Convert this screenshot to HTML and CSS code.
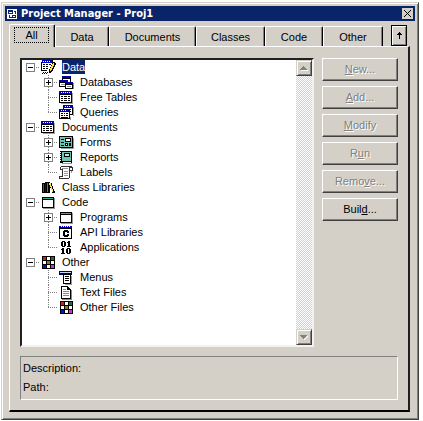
FILE: index.html
```
<!DOCTYPE html>
<html lang="en">
<head>
  <meta charset="UTF-8">
  <meta name="viewport" content="width=device-width, initial-scale=1.0">
  <title>Project Manager - Proj1</title>
  <link rel="stylesheet" href="styles.css">
</head>
<body>
  <!-- tree icons -->
  <svg class="sprite" width="0" height="0" aria-hidden="true">
    <symbol id="i-table" viewBox="0 0 16 15">
      <path fill="#a0a0a0" d="M3 13h12v1h-12zM14 3h1v11h-1z"/>
      <path d="M1 1h13v12h-13z"/>
      <path fill="#00c" d="M1 1h13v3h-13z"/>
      <path fill="#fff" d="M2 5h11v7h-11zM3 2h1v1h-1zM5 2h1v1h-1zM7 2h1v1h-1zM9 2h1v1h-1zM11 2h1v1h-1z"/>
      <path d="M3 6h2v1h-2zM6 6h3v1h-3zM10 6h2v1h-2zM3 8h2v1h-2zM6 8h3v1h-3zM10 8h2v1h-2zM3 10h2v1h-2zM6 10h3v1h-3zM10 10h2v1h-2z"/>
    </symbol>
    <symbol id="i-data" viewBox="0 0 16 15">
      <path fill="#00c" d="M2 0h10v3h-10z"/>
      <path fill="#fff" d="M3 1h1v1h-1zM5 1h1v1h-1zM7 1h1v1h-1zM9 1h1v1h-1zM2 3h10v10h-10z"/>
      <path d="M1 2h1v9h-1zM3 4h2v1h-2zM6 4h2v1h-2zM9 4h2v1h-2zM3 6h2v1h-2zM6 6h2v1h-2zM3 8h2v1h-2zM6 8h2v1h-2zM2 10h5v1h-5zM12 0h1v3h-1zM3 12h1v1h-1zM5 12h1v1h-1zM7 12h1v1h-1zM2 13h1v1h-1zM4 13h1v1h-1zM6 13h1v1h-1z"/>
      <path d="M13 2h2v1h1v2h-1v2h-1v2h-1v2h-1v1h-1v1h-2v-4h1v-2h1v-2h1v-2h1z"/>
      <path fill="#ffe040" d="M13 3h1v3h-1v2h-1v2h-1v1h-1v-3h1v-2h1v-2h1z"/>
    </symbol>
    <symbol id="i-database" viewBox="0 0 16 15">
      <path d="M4 1h9v8h-9z"/>
      <path fill="#00a" d="M4 1h9v2h-9z"/>
      <path fill="#fff" d="M5 4h7v4h-7z"/>
      <path d="M1 5h9v7h-9z"/>
      <path fill="#00a" d="M1 5h9v2h-9z"/>
      <path fill="#fff" d="M2 8h7v3h-7z"/>
      <path fill="#888" d="M3 9h5v1h-5z"/>
      <path d="M7 7h8v7h-8z"/>
      <path fill="#00a" d="M7 7h8v2h-8z"/>
      <path fill="#fff" d="M8 10h6v3h-6z"/>
      <path fill="#888" d="M9 11h4v1h-4zM15 8h1v6h-1z"/>
    </symbol>
    <symbol id="i-query" viewBox="0 0 16 15">
      <path fill="#999" d="M15 2h1v9h-1zM12 12h1v3h-1z"/>
      <path d="M5 0h10v10h-10z"/>
      <path fill="#00a" d="M5 0h10v3h-10z"/>
      <path fill="#fff" d="M6 3h8v6h-8zM7 1h1v1h-1zM9 1h1v1h-1zM11 1h1v1h-1z"/>
      <path d="M11 4h2v1h-2zM11 6h2v1h-2zM8 4h2v1h-2z"/>
      <path d="M1 4h11v10h-11z"/>
      <path fill="#00a" d="M1 4h11v3h-11z"/>
      <path fill="#fff" d="M2 7h9v6h-9zM3 5h1v1h-1zM5 5h1v1h-1zM7 5h1v1h-1z"/>
      <path d="M3 8h2v1h-2zM6 8h1v1h-1zM8 8h2v1h-2zM3 10h2v1h-2zM6 10h1v1h-1zM8 10h2v1h-2zM3 12h7v1h-7z"/>
    </symbol>
    <symbol id="i-form" viewBox="0 0 16 15">
      <path fill="#999" d="M3 13h13v1h-13zM15 3h1v11h-1z"/>
      <path d="M1 1h14v12h-14z"/>
      <path fill="#6cc5b4" d="M2 2h12v10h-12z"/>
      <path d="M3 4h3v1h-3zM3 7h3v1h-3zM3 10h3v1h-3zM7 3h6v4h-6zM7 8h3v3h-3zM11 8h2v3h-2z"/>
      <path fill="#fff" d="M8 4h4v2h-4zM8 9h1v1h-1z"/>
    </symbol>
    <symbol id="i-report" viewBox="0 0 16 15">
      <path fill="#999" d="M4 13h10v1h-10z"/>
      <path d="M2 1h12v12h-12z"/>
      <path fill="#6cc5b4" d="M4 2h9v9h-9z"/>
      <path fill="#fff" d="M1 2h2v1h-2zM1 4h2v1h-2zM1 6h2v1h-2zM1 8h2v1h-2zM1 10h2v1h-2zM5 12h8v1h-8z"/>
      <path d="M6 3h6v4h-6z"/>
      <path fill="#b8e4dc" d="M7 4h4v2h-4z"/>
    </symbol>
    <symbol id="i-label" viewBox="0 0 16 15">
      <path fill="#333" d="M3 1h11v1h1v4h-3v7h-1v1h-10v-3h3v-6h-2v-3h1z"/>
      <path fill="#fff" d="M3 2h8v2h-8zM5 4h6v9h-6zM2 12h3v1h-3zM12 3h2v2h-2z"/>
      <path fill="#999" d="M4 3h6v1h-6zM6 6h4v1h-4zM6 8h4v1h-4zM6 10h4v1h-4zM13 6h1v2h-1z"/>
    </symbol>
    <symbol id="i-books" viewBox="0 0 16 15">
      <path d="M2 3h3v-1h5v1h2v3h1v3h1v2h1v2h-3v-3h-1v-2h-1v5h-8z"/>
      <path fill="#c02040" d="M3 4h1v8h-1z"/>
      <path fill="#0000c0" d="M5 3h1v9h-1z"/>
      <path fill="#2a9a6a" d="M7 3h1v9h-1z"/>
      <path fill="#ffe94a" d="M9 3h2v3h1v3h1v3h-1v-2h-1v-3h-1v-2h-1z"/>
    </symbol>
    <symbol id="i-code" viewBox="0 0 16 15">
      <path fill="#999" d="M3 13h12v1h-12zM14 3h1v11h-1z"/>
      <path d="M2 2h12v11h-12z"/>
      <path fill="#2fa898" d="M3 3h10v1h-10z"/>
      <path fill="#fff" d="M3 5h10v7h-10z"/>
    </symbol>
    <symbol id="i-api" viewBox="0 0 16 15">
      <path d="M1 1h13v13h-13z"/>
      <path fill="#00c" d="M1 1h13v2h-13z"/>
      <path fill="#fff" d="M3 1h1v1h-1zM5 1h1v1h-1zM7 1h1v1h-1zM9 1h1v1h-1zM11 1h1v1h-1zM2 4h11v9h-11z"/>
      <path d="M6 5h4v1h1v2h-2v-1h-2v3h2v-1h2v2h-1v1h-4v-1h-1v-5h1z"/>
    </symbol>
    <symbol id="i-app" viewBox="0 0 16 15">
      <path fill-rule="evenodd" d="M4 1h3v1h1v4h-1v1h-3v-1h-1v-4h1zM5 2v4h1v-4z"/>
      <path d="M10 1h2v5h1v1h-4v-1h1v-3h-1v-1h1zM4 8h2v5h1v1h-4v-1h1v-3h-1v-1h1z"/>
      <path fill-rule="evenodd" d="M9 8h3v1h1v4h-1v1h-3v-1h-1v-4h1zM10 9v4h1v-4z"/>
    </symbol>
    <symbol id="i-other" viewBox="0 0 16 15">
      <path d="M2 1h13v13h-13z"/>
      <path fill="#d81818" d="M3 2h3v3h-3z"/>
      <path fill="#fff" d="M7 2h3v3h-3zM3 6h3v3h-3zM11 6h3v3h-3zM7 10h3v3h-3z"/>
      <path fill="#187830" d="M11 2h3v3h-3z"/>
      <path fill="#8a7a20" d="M7 6h3v3h-3z"/>
      <path fill="#1010c0" d="M3 10h3v3h-3z"/>
      <path fill="#d030d0" d="M11 10h3v3h-3z"/>
    </symbol>
    <symbol id="i-menu" viewBox="0 0 16 15">
      <path fill="#000070" d="M1 1h13v4h-13z"/>
      <path fill="#c8d8f8" d="M2 2h11v1h-11z"/>
      <path d="M5 4h8v10h-8z"/>
      <path fill="#fff" d="M6 5h6v8h-6z"/>
      <path d="M7 6h4v1h-4zM7 8h4v1h-4zM7 10h4v1h-4z"/>
      <path fill="#999" d="M13 6h1v9h-1zM7 14h6v1h-6z"/>
    </symbol>
    <symbol id="i-text" viewBox="0 0 16 15">
      <path d="M3 1h7v1h1v1h1v1h1v10h-10z"/>
      <path fill="#fff" d="M4 2h5v3h3v8h-8z"/>
      <path fill="#888" d="M5 4h3v1h-3zM5 6h6v1h-6zM5 8h6v1h-6zM5 10h6v1h-6zM13 5h1v9h-1zM4 14h10v1h-10z"/>
    </symbol>
  </svg>

  <main class="window">
    <header class="titlebar">
      <svg class="app-icon" viewBox="0 0 12 12" aria-hidden="true">
        <path fill="#fff" d="M1 1h10v10h-10z"/>
        <path fill="#0a246a" d="M2 2h5v4h-5zM6 7h4v3h-4zM3 7h1v2h2v1h-3zM8 3h2v3h-1v-2h-1z"/>
        <path fill="#fff" d="M3 4h3v1h-3zM7 8h2v1h-2z"/>
      </svg>
      <h1 class="title">Project Manager - Proj1</h1>
      <button class="close" type="button" aria-label="Close">
        <svg viewBox="0 0 7 7"><path d="M0 0h1v1h1v1h1v1h1v-1h1v-1h1v-1h1v1h-1v1h-1v1h-1v1h1v1h1v1h1v1h-1v-1h-1v-1h-1v-1h-1v1h-1v1h-1v1h-1v-1h1v-1h1v-1h1v-1h-1v-1h-1v-1h-1z"/></svg>
      </button>
    </header>

    <nav class="tabs" role="tablist">
      <button class="tab active" type="button" role="tab" aria-selected="true"><span class="focus">All</span></button>
      <button class="tab" type="button" role="tab">Data</button>
      <button class="tab" type="button" role="tab">Documents</button>
      <button class="tab" type="button" role="tab">Classes</button>
      <button class="tab" type="button" role="tab">Code</button>
      <button class="tab" type="button" role="tab">Other</button>
      <button class="pin" type="button" aria-label="Collapse">
        <svg viewBox="0 0 7 8"><path d="M3 0h1v1h1v1h1v1h-2v4h-1v-4h-2v-1h1v-1h1z"/></svg>
      </button>
    </nav>

    <section class="panel">
      <div class="content">
        <div class="tree-box">
          <ul class="tree">
            <li>
              <div class="row"><span class="slot"><button class="toggle" type="button" aria-label="Collapse Data"></button></span><svg class="icon"><use href="#i-data"/></svg><span class="label selected">Data</span></div>
              <ul>
                <li class="row"><span class="slot"><button class="toggle plus" type="button" aria-label="Expand Databases"></button></span><svg class="icon"><use href="#i-database"/></svg><span class="label">Databases</span></li>
                <li class="row"><span class="slot"></span><svg class="icon"><use href="#i-table"/></svg><span class="label">Free Tables</span></li>
                <li class="row"><span class="slot"></span><svg class="icon"><use href="#i-query"/></svg><span class="label">Queries</span></li>
              </ul>
            </li>
            <li>
              <div class="row"><span class="slot"><button class="toggle" type="button" aria-label="Collapse Documents"></button></span><svg class="icon"><use href="#i-table"/></svg><span class="label">Documents</span></div>
              <ul>
                <li class="row"><span class="slot"><button class="toggle plus" type="button" aria-label="Expand Forms"></button></span><svg class="icon"><use href="#i-form"/></svg><span class="label">Forms</span></li>
                <li class="row"><span class="slot"><button class="toggle plus" type="button" aria-label="Expand Reports"></button></span><svg class="icon"><use href="#i-report"/></svg><span class="label">Reports</span></li>
                <li class="row"><span class="slot"></span><svg class="icon"><use href="#i-label"/></svg><span class="label">Labels</span></li>
              </ul>
            </li>
            <li>
              <div class="row"><span class="slot none"></span><svg class="icon"><use href="#i-books"/></svg><span class="label">Class Libraries</span></div>
            </li>
            <li>
              <div class="row"><span class="slot"><button class="toggle" type="button" aria-label="Collapse Code"></button></span><svg class="icon"><use href="#i-code"/></svg><span class="label">Code</span></div>
              <ul>
                <li class="row"><span class="slot"><button class="toggle plus" type="button" aria-label="Expand Programs"></button></span><svg class="icon"><use href="#i-code"/></svg><span class="label">Programs</span></li>
                <li class="row"><span class="slot"></span><svg class="icon"><use href="#i-api"/></svg><span class="label">API Libraries</span></li>
                <li class="row"><span class="slot"></span><svg class="icon"><use href="#i-app"/></svg><span class="label">Applications</span></li>
              </ul>
            </li>
            <li>
              <div class="row"><span class="slot"><button class="toggle" type="button" aria-label="Collapse Other"></button></span><svg class="icon"><use href="#i-other"/></svg><span class="label">Other</span></div>
              <ul>
                <li class="row"><span class="slot"></span><svg class="icon"><use href="#i-menu"/></svg><span class="label">Menus</span></li>
                <li class="row"><span class="slot"></span><svg class="icon"><use href="#i-text"/></svg><span class="label">Text Files</span></li>
                <li class="row"><span class="slot"></span><svg class="icon"><use href="#i-other"/></svg><span class="label">Other Files</span></li>
              </ul>
            </li>
          </ul>
          <div class="scrollbar">
            <button class="arrow" type="button" aria-label="Scroll up" disabled><svg viewBox="0 0 8 5"><path fill="#fff" d="M1 4h7v1h-7z"/><path fill="#808080" d="M3 0h1v1h1v1h1v1h1v1h-7v-1h1v-1h1v-1h1z"/></svg></button>
            <button class="arrow" type="button" aria-label="Scroll down" disabled><svg viewBox="0 0 8 5"><path fill="#fff" d="M7 1h1v1h-1v1h-1v1h-1v1h-1v-1h1v-1h1v-1h1z"/><path fill="#808080" d="M0 0h7v1h-1v1h-1v1h-1v1h-1v-1h-1v-1h-1v-1h-1z"/></svg></button>
          </div>
        </div>

        <div class="actions">
          <button class="btn" type="button" disabled><u>N</u>ew...</button>
          <button class="btn" type="button" disabled><u>A</u>dd...</button>
          <button class="btn" type="button" disabled><u>M</u>odify</button>
          <button class="btn" type="button" disabled>R<u>u</u>n</button>
          <button class="btn" type="button" disabled>Remo<u>v</u>e...</button>
          <button class="btn" type="button">Buil<u>d</u>...</button>
        </div>
      </div>

      <div class="info">
        <p>Description:</p>
        <p>Path:</p>
      </div>
    </section>
  </main>
</body>
</html>
```
FILE: styles.css
```
* {box-sizing: border-box;margin: 0;padding: 0;list-style: none;}
body {padding: 2px 4px 1px 1px;background-color: #fff;color: #000;font: 11px/15px "Liberation Sans", Arial, sans-serif;}
button {font: inherit;color: inherit;background-color: #d4d0c8;border: 0;}
svg {display: block;flex: none;shape-rendering: crispEdges;}
.sprite {position: absolute;}

.window {
  padding: 3px;
  background-color: #d4d0c8;
  border: 1px solid;
  border-color: #d4d0c8 #404040 #404040 #d4d0c8;
  box-shadow: inset 1px 1px #fff, inset -1px -1px #808080;
}

/* title bar */
.titlebar {display: flex;align-items: center;height: 15px;padding: 0 2px 0 1px;background-color: #0a246a;}
.app-icon {width: 12px;height: 12px;}
.title {flex: 1;padding-left: 3px;color: #fff;font: bold 11px/15px "DejaVu Sans Condensed", "DejaVu Sans", sans-serif;}
.close {display: flex;align-items: center;justify-content: center;width: 11px;height: 11px;}
.close svg {width: 7px;height: 7px;}

/* tabs */
.tabs {
  display: grid;
  grid-template-columns: 46fr 54fr 87fr 69fr 58fr 60fr 27px;
  align-items: end;
  height: 25px;
  margin: 0 5px 0 4px;
}
.tab {
  height: 20px;
  padding-top: 2px;
  border: 1px solid;
  border-color: #fff #000 transparent #fff;
  border-bottom: 0;
  border-radius: 2px 2px 0 0;
  box-shadow: inset -1px 0 #808080;
}
.tab.active {height: 23px;margin-bottom: -1px;padding: 2px 5px 4px 4px;z-index: 1;}
.focus {display: block;height: 16px;border: 1px dotted #000;}
.pin {
  display: flex;
  align-items: center;
  justify-content: center;
  width: 16px;
  height: 21px;
  margin-left: 8px;
  border: 1px solid #000;
  box-shadow: inset 1px 1px #fff, inset -1px -1px #808080;
}
.pin svg {width: 7px;height: 8px;}

/* panel */
.panel {
  margin: 0 5px 4px 4px;
  padding: 11px 10px 10px;
  border: 1px solid;
  border-color: #fff #202020 #000 #fff;
  border-width: 1px 2px 2px 1px;
}
.content {display: flex;gap: 8px;}
.tree-box {
  display: flex;
  flex: 1;
  background-color: #fff;
  border: 2px solid;
  border-color: #202020 #f4f2ee #f4f2ee #202020;
}
.tree {flex: 1;padding: 0 0 30px 4px;}
.tree ul {padding-left: 18px;}
.row {display: flex;height: 15px;}
.slot {
  display: flex;
  align-items: center;
  width: 14px;
  background: repeating-linear-gradient(to right, #808080 0 1px, transparent 1px 2px) no-repeat 4px 7px / 10px 1px;
}
.tree ul .slot {
  background:
    repeating-linear-gradient(to right, #808080 0 1px, transparent 1px 2px) no-repeat 4px 7px / 10px 1px,
    repeating-linear-gradient(to bottom, #808080 0 1px, transparent 1px 2px) no-repeat 4px 0 / 1px 15px;
}
.tree ul .row:last-child .slot {background-size: 10px 1px, 1px 8px;}
.slot.none {background: none;}
.toggle {
  width: 9px;
  height: 9px;
  border: 1px solid #808080;
  background: #fff linear-gradient(#000, #000) no-repeat center / 5px 1px;
}
.toggle.plus {
  background:
    linear-gradient(#000, #000) no-repeat center / 5px 1px,
    linear-gradient(#000, #000) no-repeat center / 1px 5px,
    #fff;
}
.icon {width: 16px;height: 15px;margin-right: 6px;}
.label.selected {height: 14px;color: #fff;background-color: #0a246a;}

/* scrollbar */
.scrollbar {
  display: flex;
  flex-direction: column;
  justify-content: space-between;
  width: 16px;
  background: repeating-conic-gradient(#d4d0c8 0 25%, #fff 0 50%) 0 0 / 2px 2px;
}
.arrow {
  display: flex;
  align-items: center;
  justify-content: center;
  height: 16px;
  border: 1px solid;
  border-color: #d4d0c8 #404040 #404040 #d4d0c8;
  box-shadow: inset 1px 1px #fff, inset -1px -1px #808080;
}
.arrow svg {width: 8px;height: 5px;}

/* buttons */
.actions {display: flex;flex-direction: column;gap: 5px;width: 76px;}
.btn {
  height: 23px;
  border: 1px solid;
  border-color: #fff #404040 #404040 #fff;
  box-shadow: inset -1px -1px #808080;
}
.btn:disabled {color: #808080;text-shadow: 1px 1px #fff;}

/* description */
.info {
  margin-top: 9px;
  padding: 2px;
  line-height: 19px;
  border: 1px solid;
  border-color: #808080 #fff #fff #808080;
}
```
